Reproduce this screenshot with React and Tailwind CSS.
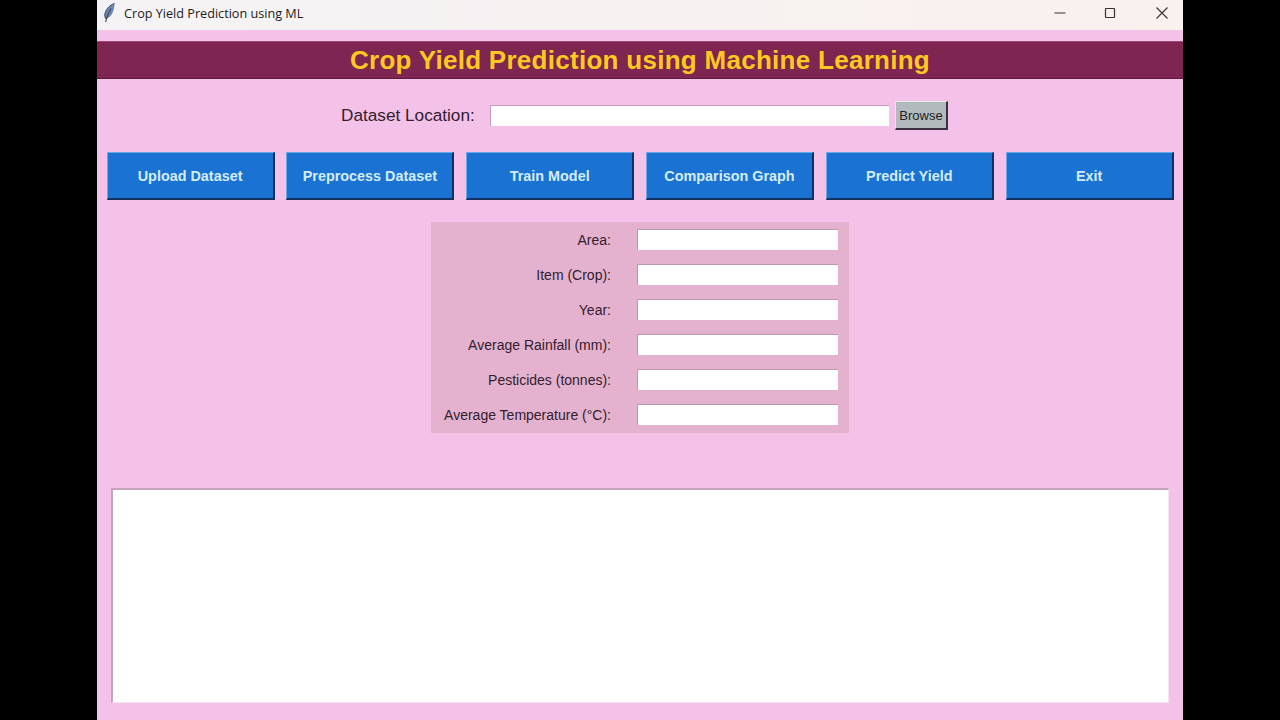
const buttons = ["Upload Dataset", "Preprocess Dataset", "Train Model", "Comparison Graph", "Predict Yield", "Exit"];
const fields = ["Area:", "Item (Crop):", "Year:", "Average Rainfall (mm):", "Pesticides (tonnes):", "Average Temperature (°C):"];

function Feather() {
  return (
    <svg width="14" height="20" viewBox="0 0 14 20" className="shrink-0">
      <path d="M11.5 0.5 C6.5 2 2 7 1.8 12 C1.8 14 2.3 15.5 3 16 C7.5 14.5 11.5 9 11.5 0.5 Z" fill="#6f88ae" />
      <path d="M11.5 0.5 C6.5 2 2 7 1.8 12 C1.8 14 2.3 15.5 3 16" fill="none" stroke="#33435f" strokeWidth="1" />
      <path d="M8 5.5 C5.8 9 4 13.5 2.6 19" fill="none" stroke="#26324a" strokeWidth="1" />
    </svg>
  );
}

export default function App() {
  return (
    <div className="w-[1280px] h-[720px] bg-black flex justify-center overflow-hidden font-['Liberation_Sans',sans-serif]">
      <div className="w-[1086px] h-full bg-[#f4c1e9] flex flex-col">
        {/* title bar */}
        <div className="h-[30px] shrink-0 flex items-center bg-gradient-to-r from-[#f5f3f5] to-[#f9f1ee] pl-[6px]">
          <div className="mb-[5px]"><Feather /></div>
          <span className="ml-[7px] mb-[4px] text-[12.65px] text-[#1c1c1c] font-['Open_Sans',sans-serif]">Crop Yield Prediction using ML</span>
          <div className="ml-auto flex items-center mb-[4px]">
            <svg width="52" height="12" viewBox="0 0 12 12"><path d="M0.5 6 H11.5" stroke="#333" strokeWidth="1" /></svg>
            <svg width="50" height="12" viewBox="2 0 50 12"><rect x="21.5" y="1.5" width="9" height="9" rx="0.5" fill="none" stroke="#333" strokeWidth="1.2" /></svg>
            <svg width="47" height="12" viewBox="0 0 47 12"><path d="M20.5 0.5 L31.5 11.5 M31.5 0.5 L20.5 11.5" stroke="#333" strokeWidth="1.1" /></svg>
          </div>
        </div>

        {/* heading */}
        <div className="mt-[11px] h-[38px] shrink-0 flex items-center justify-center bg-[#7e2552] border-t border-[#9a4a75] border-b border-b-[#5f1a3d]">
          <h1 className="text-[26px] font-bold tracking-[0.28px] text-[#fdc921]">Crop Yield Prediction using Machine Learning</h1>
        </div>

        {/* dataset row */}
        <div className="mt-[22px] h-[29px] shrink-0 flex items-center pl-[244px]">
          <span className="w-[135px] pt-[1px] text-[17.2px] whitespace-nowrap text-[#33202d]">Dataset Location:</span>
          <div className="ml-[14px] w-[399px] h-[21px] bg-white border-t border-l border-[#c79cbc]" />
          <button className="ml-[6px] w-[53px] h-[29px] pt-[1px] text-[13px] text-[#222] bg-[#b3babd] border-t border-l border-t-[#e8e6ea] border-l-[#e8e6ea] border-r-2 border-b-2 border-r-[#3a3040] border-b-[#3a3040]">Browse</button>
        </div>

        {/* action buttons */}
        <div className="mt-[22px] shrink-0 flex gap-[11.8px] pl-[9.6px]">
          {buttons.map((label) => (
            <button key={label} className="w-[168px] h-[48px] pt-[3px] text-[14.4px] font-bold text-[#d3ecfb] bg-[#1a72d2] border-t border-l border-t-[#6aa7e6] border-l-[#6aa7e6] border-r-2 border-b-2 border-r-[#12305e] border-b-[#12305e]">
              {label}
            </button>
          ))}
        </div>

        {/* input form */}
        <div className="mt-[22px] ml-[334px] w-[418px] h-[211px] shrink-0 bg-[#e4b2ce] flex flex-col gap-[14px] pt-[7px]">
          {fields.map((label) => (
            <div key={label} className="h-[21px] flex items-center">
              <span className="w-[180px] pt-[2px] text-right text-[14px] text-[#33202d]">{label}</span>
              <div className="ml-[26px] w-[201px] h-[21px] bg-white border-t border-l border-[#bb98b0]" />
            </div>
          ))}
        </div>

        {/* output area */}
        <div className="mt-[55px] ml-[14px] w-[1058px] h-[215px] shrink-0 bg-white border-t-2 border-l-2 border-r border-b border-t-[#c3a4bc] border-l-[#c3a4bc] border-r-[#f7e3f3] border-b-[#f7e3f3]" />
      </div>
    </div>
  );
}
